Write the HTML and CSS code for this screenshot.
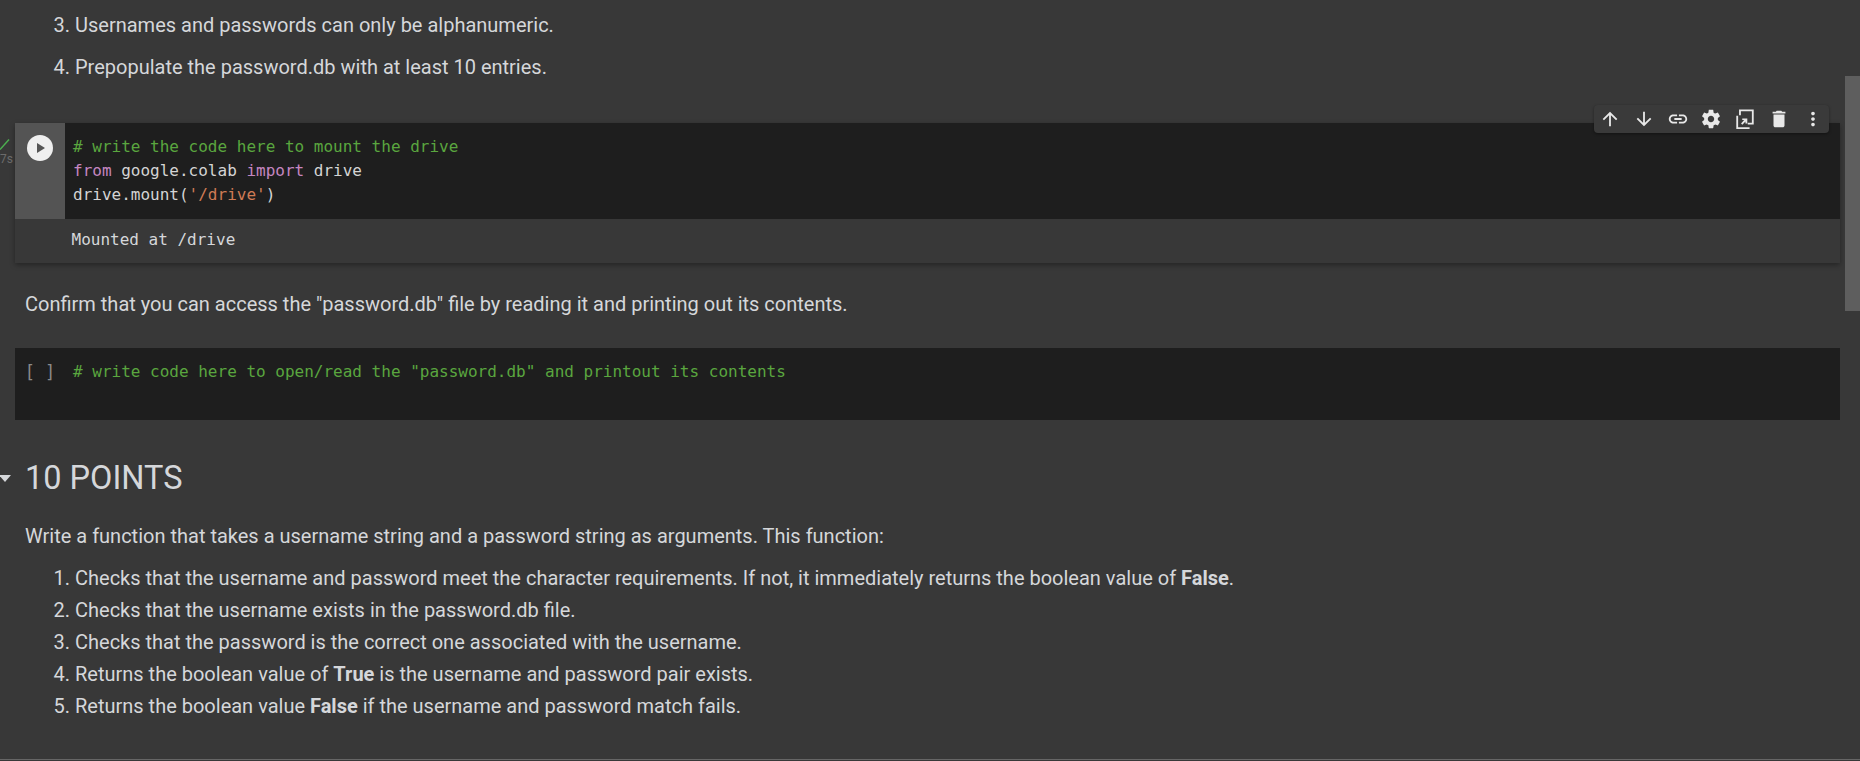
FILE: index.html
```html
<!DOCTYPE html>
<html lang="en">
<head>
<meta charset="utf-8">
<title>Notebook</title>
<link rel="stylesheet" href="styles.css">
</head>
<body>
<main class="notebook">
  <ol class="list list-spaced" start="3">
    <li>Usernames and passwords can only be alphanumeric.</li>
    <li>Prepopulate the password.db with at least 10 entries.</li>
  </ol>

  <section class="cell cell-run">
    <div class="status"><svg class="check" viewBox="0 0 10 11"><path d="M0 10.500 L9 0.500"/></svg><span class="time">7s</span></div>
    <div class="toolbar">
      <svg class="tool" viewBox="0 0 24 24"><path d="M4 12l1.410 1.410L11 7.830V20h2V7.830l5.580 5.590L20 12l-8-8-8 8z"/></svg>
      <svg class="tool" viewBox="0 0 24 24"><path d="M20 12l-1.410-1.410L13 16.170V4h-2v12.170l-5.580-5.590L4 12l8 8 8-8z"/></svg>
      <svg class="tool" viewBox="0 0 24 24"><path d="M3.900 12c0-1.710 1.390-3.100 3.100-3.100h4V7H7c-2.760 0-5 2.240-5 5s2.240 5 5 5h4v-1.900H7c-1.710 0-3.100-1.390-3.100-3.100zM8 13h8v-2H8v2zm9-6h-4v1.900h4c1.710 0 3.100 1.390 3.100 3.100s-1.390 3.100-3.100 3.100h-4V17h4c2.760 0 5-2.240 5-5s-2.240-5-5-5z"/></svg>
      <svg class="tool" viewBox="0 0 24 24"><path d="M19.430 12.980c.04-.32.07-.64.07-.98s-.03-.66-.07-.98l2.110-1.650c.19-.15.24-.42.12-.64l-2-3.460c-.12-.22-.39-.3-.61-.22l-2.490 1c-.52-.4-1.080-.73-1.690-.98l-.38-2.650C14.460 2.180 14.250 2 14 2h-4c-.25 0-.46.18-.49.42l-.38 2.650c-.61.25-1.170.59-1.690.98l-2.490-1c-.23-.09-.49 0-.61.22l-2 3.460c-.13.22-.07.49.12.64l2.110 1.650c-.04.32-.07.65-.07.98s.03.66.07.98l-2.110 1.650c-.19.15-.24.42-.12.64l2 3.460c.12.22.39.3.61.22l2.490-1c.52.4 1.080.73 1.690.98l.38 2.650c.03.24.24.42.49.42h4c.25 0 .46-.18.49-.42l.38-2.650c.61-.25 1.170-.59 1.690-.98l2.490 1c.23.09.49 0 .61-.22l2-3.460c.12-.22.07-.49-.12-.64l-2.110-1.650zM12 15.500c-1.930 0-3.500-1.570-3.500-3.500s1.570-3.500 3.500-3.500 3.500 1.570 3.500 3.500-1.570 3.500-3.500 3.500z"/></svg>
      <svg class="tool" viewBox="0 0 24 24"><path d="M5.500 1.500H21.500V18H15V16H19.500V3.500H7.500V8H5.500z M2.500 8.500h2V21H17v2H2.500z M9 11.500h5.500V17h-2v-2.200l-3.400 3.400-1.400-1.400 3.400-3.800H9z"/></svg>
      <svg class="tool" viewBox="0 0 24 24"><path d="M6 19c0 1.100.9 2 2 2h8c1.100 0 2-.9 2-2V7H6v12zM19 4h-3.500l-1-1h-5l-1 1H5v2h14V4z"/></svg>
      <svg class="tool" viewBox="0 0 24 24"><path d="M12 8c1.100 0 2-.9 2-2s-.9-2-2-2-2 .9-2 2 .9 2 2 2zm0 2c-1.100 0-2 .9-2 2s.9 2 2 2 2-.9 2-2-.9-2-2-2zm0 6c-1.100 0-2 .9-2 2s.9 2 2 2 2-.9 2-2-.9-2-2-2z"/></svg>
    </div>
    <div class="cell-main">
      <div class="gutter gutter-active">
        <div class="run"><svg class="run-icon" viewBox="0 0 24 24"><path d="M8 5.300v13.400L18.700 12z"/></svg></div>
      </div>
      <div class="code">
        <div class="line comment"># write the code here to mount the drive</div>
        <div class="line"><span class="keyword">from</span> google.colab <span class="keyword">import</span> drive</div>
        <div class="line">drive.mount(<span class="string">'/drive'</span>)</div>
      </div>
    </div>
    <div class="output">Mounted at /drive</div>
  </section>

  <p class="para para-confirm">Confirm that you can access the "password.db" file by reading it and printing out its contents.</p>

  <section class="cell cell-idle">
    <div class="cell-main">
      <div class="gutter"><span class="brackets">[ ]</span></div>
      <div class="code code-short">
        <div class="line comment"># write code here to open/read the "password.db" and printout its contents</div>
      </div>
    </div>
  </section>

  <div class="heading-row">
    <span class="caret"></span>
    <h1 class="heading">10 POINTS</h1>
  </div>

  <p class="para para-intro">Write a function that takes a username string and a password string as arguments. This function:</p>

  <ol class="list list-tight">
    <li>Checks that the username and password meet the character requirements. If not, it immediately returns the boolean value of <b>False</b>.</li>
    <li>Checks that the username exists in the password.db file.</li>
    <li>Checks that the password is the correct one associated with the username.</li>
    <li>Returns the boolean value of <b>True</b> is the username and password pair exists.</li>
    <li>Returns the boolean value <b>False</b> if the username and password match fails.</li>
  </ol>
</main>
<div class="rule"></div>
<div class="scrollbar"></div>
</body>
</html>
```
FILE: styles.css
```css
* { box-sizing: border-box; }
html, body { margin: 0; height: 761px; overflow: hidden; }
body { background: #383838; color: #d5d7da; font-family: Roboto, "Liberation Sans", sans-serif; font-size: 20px; line-height: 32px; position: relative; }
.notebook { padding: 9px 20px 0 15px; }
.list { margin: 0; padding: 0 0 0 60px; }
.list-spaced li { margin-bottom: 10px; }
.list-tight { margin-top: 10px; }
.para { margin: 0; padding-left: 10px; }
.cell { position: relative; }
.cell-run { margin-top: 40px; background: #383838; box-shadow: 0 2px 5px rgba(0,0,0,.35); }
.cell-idle { margin-top: 28px; }
.cell-main { display: flex; background: #1e1e1e; }
.gutter { width: 50px; flex: none; display: flex; justify-content: center; color: #8a8a8a; }
.gutter-active { background: #545454; padding-top: 12px; }
.run { width: 26px; height: 26px; border-radius: 50%; background: #efefef; display: flex; align-items: center; justify-content: center; }
.run-icon { width: 18px; height: 18px; fill: #555; }
.brackets { font-family: "DejaVu Sans Mono", monospace; font-size: 17px; line-height: 24px; margin-top: 12px; }
.code, .output { font-family: "DejaVu Sans Mono", monospace; font-size: 16px; line-height: 24px; }
.line { white-space: pre; }
.code { padding: 12px 0 12px 8px; color: #d4d4d4; flex: 1; }
.code-short { height: 72px; }
.output { padding: 9px 0 11px 56.500px; height: 44px; color: #d5d7da; background: #383838; }
.comment { color: #5aa63f; }
.keyword { color: #c586c0; }
.string { color: #ce7b55; }
.para-confirm { margin-top: 25px; }
.heading-row { display: flex; align-items: center; margin-top: 38px; margin-left: -15px; }
.caret { width: 0; height: 0; margin: 1px 0 0 -1px; border-left: 6px solid transparent; border-right: 6px solid transparent; border-top: 7px solid #d5d7da; }
.heading { margin: 0 0 0 14px; font-size: 32.500px; font-weight: 400; line-height: 40px; color: #d5d7da; }
.para-intro { margin-top: 22px; }
.status { position: absolute; left: -15px; top: 16px; width: 14px; display: flex; flex-direction: column; line-height: 14px; color: #6b6b6b; }
.check { width: 10px; height: 11px; fill: none; stroke: #4caf50; stroke-width: 1.500; }
.time { font-size: 12px; margin-top: 2px; }
.toolbar { position: absolute; right: 11px; top: -18px; width: 235px; height: 28px; padding: 0 5px; display: flex; align-items: center; justify-content: space-between; background: #3a3a3a; border-radius: 4px; box-shadow: 0 1px 3px rgba(0,0,0,.4); z-index: 2; }
.tool { width: 22px; height: 22px; fill: #e8e8e8; }
.rule { position: absolute; left: 0; right: 0; top: 759px; height: 1px; background: #666; }
.scrollbar { position: absolute; left: 1845px; top: 76px; width: 15px; height: 235px; background: #5e5e5e; }
```
